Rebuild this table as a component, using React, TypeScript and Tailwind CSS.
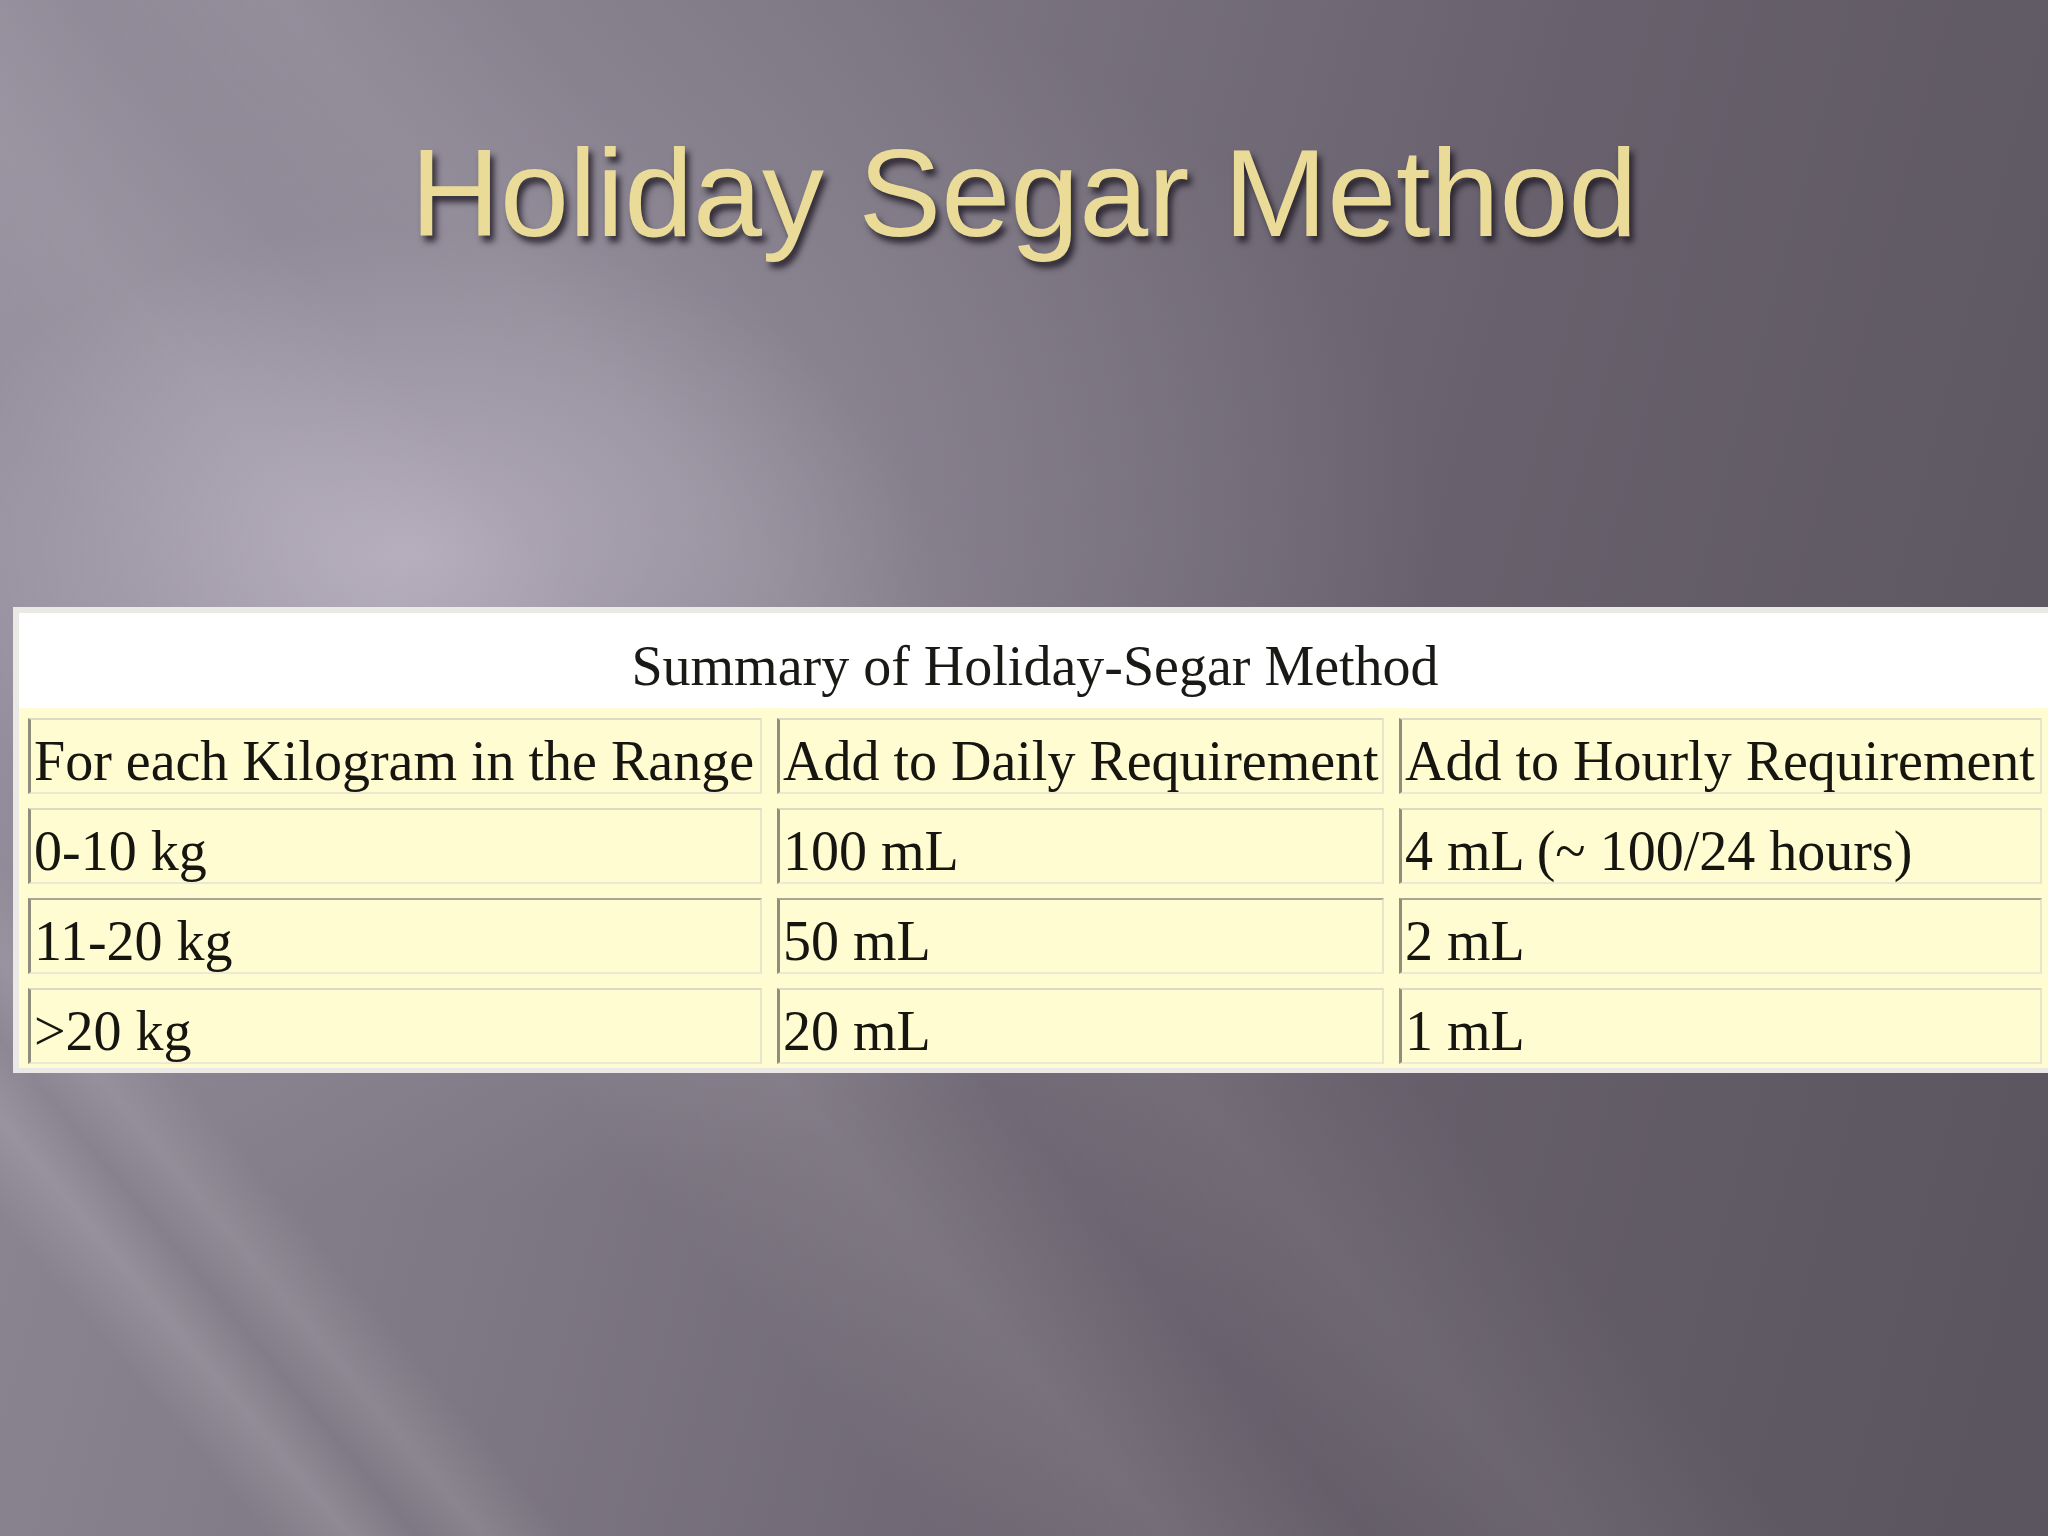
const rows = [
  ['For each Kilogram in the Range', 'Add to Daily Requirement', 'Add to Hourly Requirement'],
  ['0-10 kg', '100 mL', '4 mL (~ 100/24 hours)'],
  ['11-20 kg', '50 mL', '2 mL'],
  ['>20 kg', '20 mL', '1 mL'],
];

function Cell({ text, strongTop }: { text: string; strongTop?: boolean }) {
  return (
    <div
      className={`h-[76px] border-l-[3px] border-l-[#8f8d7c] border-t-2 border-r-2 border-r-[#e6e4cc] border-b-2 border-b-[#ebe9d2] pl-[3px] pt-[10px] leading-[62px] whitespace-nowrap text-[#16150f] ${
        strongTop ? 'border-t-[#a8a692]' : 'border-t-[#dcdac2]'
      }`}
    >
      {text}
    </div>
  );
}

export default function App() {
  return (
    <div className="relative w-full h-[1536px] overflow-hidden bg-[image:radial-gradient(ellipse_50%_42%_at_20%_36%,rgba(196,188,204,0.75)_0%,rgba(160,152,168,0.35)_50%,transparent_100%),linear-gradient(50deg,transparent_8%,rgba(255,255,255,0.12)_10.5%,transparent_12.5%,rgba(255,255,255,0.10)_14.5%,transparent_17%,transparent_28%,rgba(255,255,255,0.08)_35%,transparent_41%,rgba(255,255,255,0.06)_47%,transparent_54%),linear-gradient(105deg,#928c9a_0%,#7d7783_35%,#68616d_65%,#59545d_100%)]">
      <h1 className="pt-[131px] text-center text-[124px] leading-none text-[#eadc98] font-['Liberation_Sans',Arial,sans-serif] [text-shadow:4px_6px_6px_rgba(25,20,30,0.8)]">
        Holiday Segar Method
      </h1>

      <div className="mt-[352px] ml-[13px] w-[2044px] border-[6px] border-b-[5px] border-[#ebe9e5] bg-white font-['Liberation_Serif','Times_New_Roman',serif] text-[56px]">
        <div className="h-[95px] pt-[22px] text-center leading-[62px] text-[#1a1916]">
          Summary of Holiday-Segar Method
        </div>
        <div className="bg-[#fefcd0] pl-[9px] pt-[10px] pb-[4px]">
          <div className="grid grid-cols-[734px_607px_643px] gap-x-[15px] gap-y-[14px]">
            {rows.map((row, i) =>
              row.map((text, j) => (
                <Cell key={`${i}-${j}`} text={text} strongTop={i === 2} />
              ))
            )}
          </div>
        </div>
      </div>
    </div>
  );
}
